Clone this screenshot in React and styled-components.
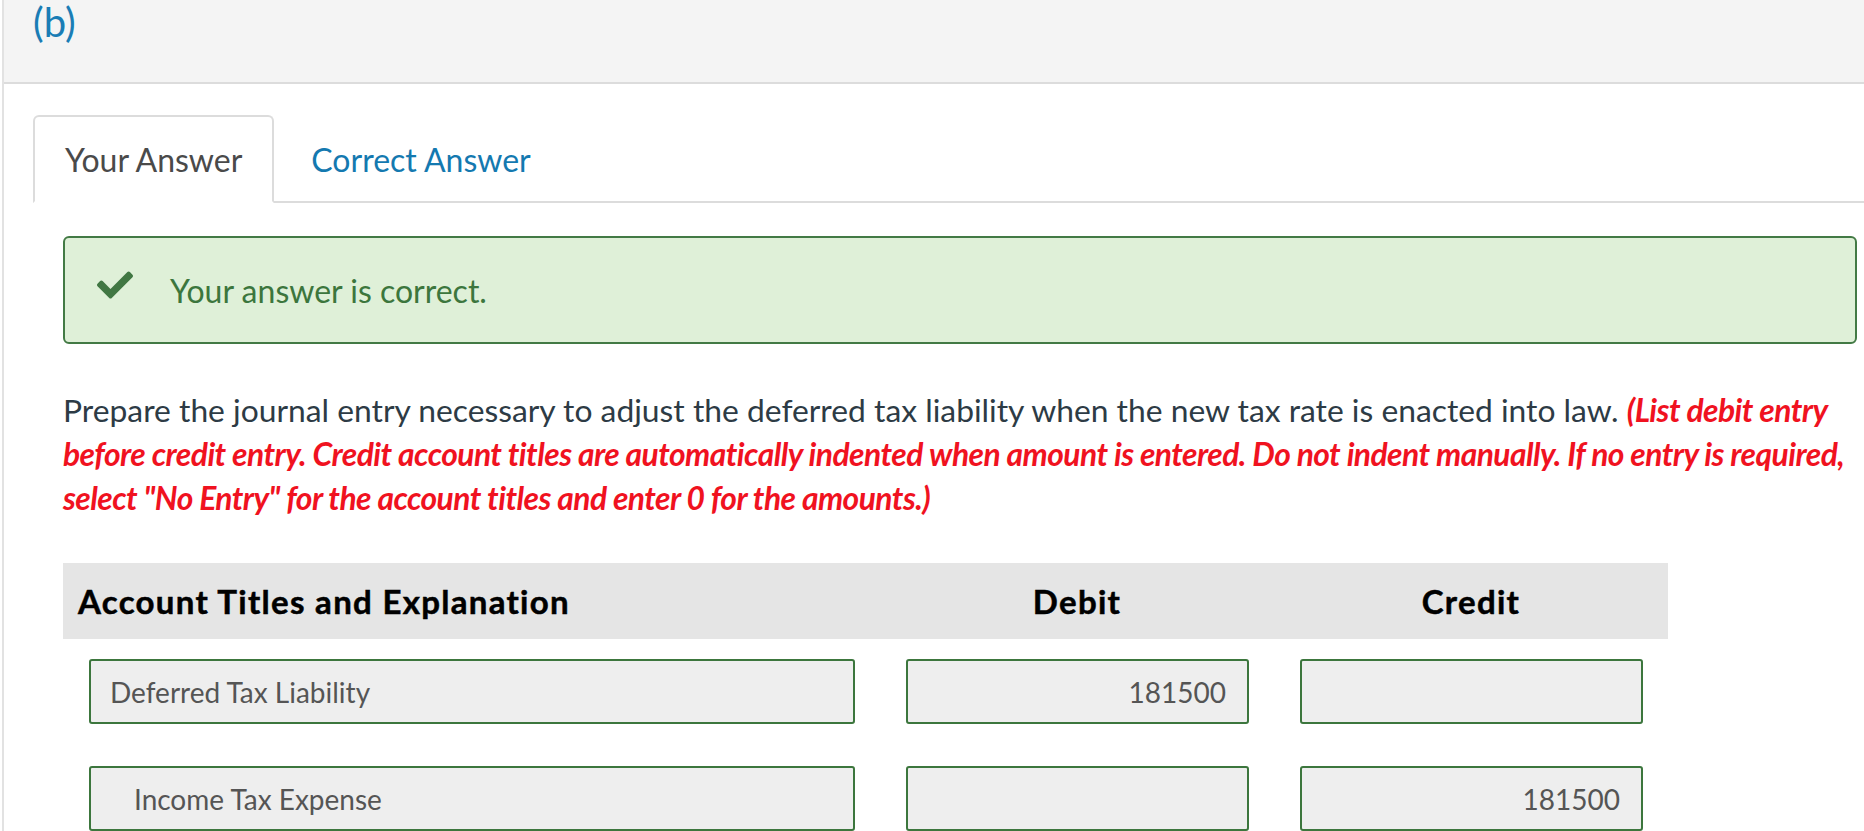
import React from 'react';
import styled, { createGlobalStyle } from 'styled-components';
import { FaCheck } from 'react-icons/fa';

const GlobalStyle = createGlobalStyle`
  html, body {
    margin: 0;
    padding: 0;
    background: #fff;
    font-family: Lato, "Open Sans", sans-serif;
  }
`;

const Panel = styled.div`
  margin-left: 2px;
  border-left: 2px solid #e2e2e2;
  min-height: 831px;
  overflow: hidden;
`;

const PartHeader = styled.div`
  height: 82px;
  background: #f4f4f4;
  border-bottom: 2px solid #dcdcdc;
  padding-left: 29px;
  > span {
    display: block;
    font-size: 40px;
    line-height: 44px;
    color: #1a7db5;
  }
`;

const Body = styled.div`
  padding: 31px 7px 0 29px;
`;

const TabList = styled.ul`
  display: flex;
  list-style: none;
  margin: 0 -7px 0 0;
  padding: 0;
  border-bottom: 2px solid #dcdcdc;
`;

const Tab = styled.li`
  height: 84px;
  display: flex;
  align-items: center;
  padding: 0 30px;
  margin-right: 5px;
  margin-bottom: ${(p) => (p.active ? '-2px' : '0')};
  font-size: 32px;
  border: 2px solid ${(p) => (p.active ? '#dcdcdc' : 'transparent')};
  border-bottom: ${(p) => (p.active ? '2px solid #fff' : 'none')};
  border-radius: 6px 6px 0 0;
  background: ${(p) => (p.active ? '#fff' : 'transparent')};
  color: ${(p) => (p.active ? '#4a4a4a' : '#1479b0')};
`;

const TabPanel = styled.div`
  padding: 33px 0 0 30px;
`;

const Alert = styled.div`
  display: flex;
  align-items: center;
  height: 108px;
  box-sizing: border-box;
  padding-left: 32px;
  border: 2px solid #437a45;
  border-radius: 6px;
  background: #dff0d8;
  color: #3c763d;
  font-size: 32px;
  > svg {
    font-size: 36px;
    margin-right: 37px;
    margin-top: -10px;
    color: #417743;
  }
`;

const Question = styled.p`
  margin: 44px 0 0;
  font-size: 31.8px;
  line-height: 44px;
  color: #2d3b45;
`;

const Note = styled.em`
  color: #f0121f;
  font-weight: 700;
  letter-spacing: -0.55px;
`;

const JournalTable = styled.div`
  margin-top: 43px;
  width: 1605px;
  display: grid;
  grid-template-columns: 817px 394px 394px;
`;

const HeadCell = styled.div`
  height: 76px;
  display: flex;
  align-items: center;
  justify-content: ${(p) => (p.center ? 'center' : 'flex-start')};
  padding-left: ${(p) => (p.center ? '0' : '15px')};
  background: #e5e5e5;
  font-size: 33px;
  font-weight: 700;
  letter-spacing: 1.3px;
  -webkit-text-stroke: 0.5px #000;
  color: #000;
`;

const Cell = styled.div`
  padding: ${(p) => (p.first ? '20px' : '42px')} 25px 0 26px;
`;

const Field = styled.div`
  height: 65px;
  box-sizing: border-box;
  display: flex;
  align-items: center;
  justify-content: ${(p) => (p.amount ? 'flex-end' : 'flex-start')};
  padding: 0 ${(p) => (p.amount ? '21px' : '0')} 0 ${(p) => (p.indent ? '43px' : '19px')};
  border: 2px solid #3c763d;
  border-radius: 3px;
  background: #eee;
  font-size: 28px;
  color: #555;
`;

const rows = [
  { account: 'Deferred Tax Liability', debit: '181500', credit: '', indent: false },
  { account: 'Income Tax Expense', debit: '', credit: '181500', indent: true },
];

export default function App() {
  return (
    <>
      <GlobalStyle />
      <Panel>
        <PartHeader>
          <span>(b)</span>
        </PartHeader>
        <Body>
          <TabList>
            <Tab active>Your Answer</Tab>
            <Tab>Correct Answer</Tab>
          </TabList>
          <TabPanel>
            <Alert>
              <FaCheck />
              Your answer is correct.
            </Alert>
            <Question>
              Prepare the journal entry necessary to adjust the deferred tax liability when the new tax rate is
              enacted into law.{' '}
              <Note>
                (List debit entry before credit entry. Credit account titles are automatically indented when
                amount is entered. Do not indent manually. If no entry is required, select "No Entry" for the
                account titles and enter 0 for the amounts.)
              </Note>
            </Question>
            <JournalTable>
              <HeadCell>Account Titles and Explanation</HeadCell>
              <HeadCell center>Debit</HeadCell>
              <HeadCell center>Credit</HeadCell>
              {rows.map((r, i) => (
                <React.Fragment key={i}>
                  <Cell first={i === 0}>
                    <Field indent={r.indent}>{r.account}</Field>
                  </Cell>
                  <Cell first={i === 0}>
                    <Field amount>{r.debit}</Field>
                  </Cell>
                  <Cell first={i === 0}>
                    <Field amount>{r.credit}</Field>
                  </Cell>
                </React.Fragment>
              ))}
            </JournalTable>
          </TabPanel>
        </Body>
      </Panel>
    </>
  );
}
